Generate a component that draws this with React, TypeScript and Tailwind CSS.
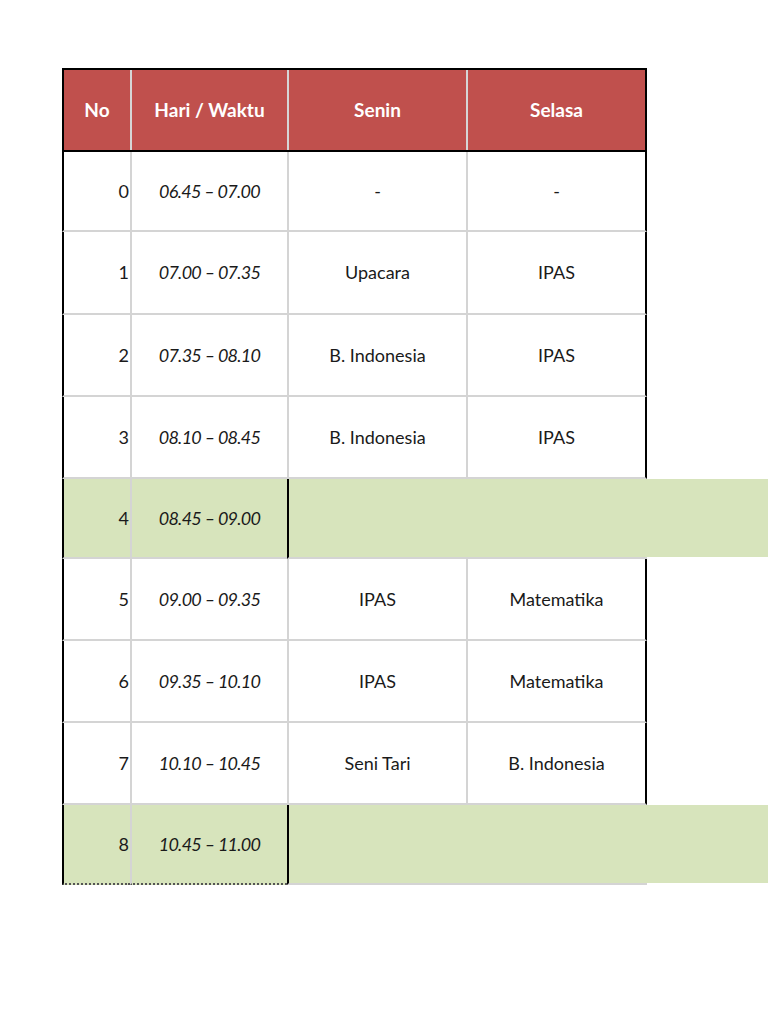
type Baris = {
  no: number;
  waktu: string;
  senin?: string;
  selasa?: string;
  istirahat?: boolean;
  tinggi: string;
};

const jadwal: Baris[] = [
  { no: 0, waktu: '06.45 – 07.00', senin: '-', selasa: '-', tinggi: 'h-[80px]' },
  { no: 1, waktu: '07.00 – 07.35', senin: 'Upacara', selasa: 'IPAS', tinggi: 'h-[83px]' },
  { no: 2, waktu: '07.35 – 08.10', senin: 'B. Indonesia', selasa: 'IPAS', tinggi: 'h-[82px]' },
  { no: 3, waktu: '08.10 – 08.45', senin: 'B. Indonesia', selasa: 'IPAS', tinggi: 'h-[82px]' },
  { no: 4, waktu: '08.45 – 09.00', istirahat: true, tinggi: 'h-[80px]' },
  { no: 5, waktu: '09.00 – 09.35', senin: 'IPAS', selasa: 'Matematika', tinggi: 'h-[82px]' },
  { no: 6, waktu: '09.35 – 10.10', senin: 'IPAS', selasa: 'Matematika', tinggi: 'h-[82px]' },
  { no: 7, waktu: '10.10 – 10.45', senin: 'Seni Tari', selasa: 'B. Indonesia', tinggi: 'h-[82px]' },
  { no: 8, waktu: '10.45 – 11.00', istirahat: true, tinggi: 'h-[80px]' },
];

export default function App() {
  return (
    <div className="min-h-[1024px] bg-white pt-[68px] pl-[62px] font-['Lato',sans-serif] text-[18px] text-[#1a1a1a]">
      <div className="w-[706px]">
        {/* header */}
        <div className="flex h-[84px] w-[585px] border-2 border-black bg-[#c0504d] text-[19px] font-bold text-white">
          <div className="flex w-[66px] items-center justify-center">No</div>
          <div className="flex w-[157px] items-center justify-center border-l-2 border-[#d6d6d6]">Hari / Waktu</div>
          <div className="flex w-[179px] items-center justify-center border-l-2 border-[#d6d6d6]">Senin</div>
          <div className="flex flex-1 items-center justify-center border-l-2 border-[#d6d6d6]">Selasa</div>
        </div>

        {jadwal.map((b, i) => {
          const akhir = i === jadwal.length - 1;
          const garisBawah = akhir
            ? 'border-b-2 border-b-[#555] [border-bottom-style:dotted]'
            : 'border-b-2 border-b-[#d4d4d4]';
          const bg = b.istirahat ? 'bg-[#d7e4bc]' : 'bg-white';
          return (
            <div key={b.no} className={`flex ${b.tinggi}`}>
              <div className={`flex w-[68px] items-center justify-end border-l-2 border-l-black pr-[1px] ${garisBawah} ${bg}`}>
                {b.no}
              </div>
              <div className={`flex w-[157px] items-center justify-center border-l-2 border-l-[#d4d4d4] italic tracking-[-0.7px] ${garisBawah} ${bg}`}>
                {b.waktu}
              </div>
              {b.istirahat ? (
                <>
                  <div className="w-[360px] border-l-2 border-l-black border-b-2 border-b-[#d4d4d4] bg-[#d7e4bc]" />
                  <div className="mb-[2px] w-[121px] bg-[#d7e4bc]" />
                </>
              ) : (
                <>
                  <div className="flex w-[179px] items-center justify-center border-l-2 border-l-[#d4d4d4] border-b-2 border-b-[#d4d4d4]">
                    {b.senin}
                  </div>
                  <div className="flex w-[181px] items-center justify-center border-l-2 border-l-[#d4d4d4] border-r-2 border-r-black border-b-2 border-b-[#d4d4d4]">
                    {b.selasa}
                  </div>
                </>
              )}
            </div>
          );
        })}
      </div>
    </div>
  );
}
